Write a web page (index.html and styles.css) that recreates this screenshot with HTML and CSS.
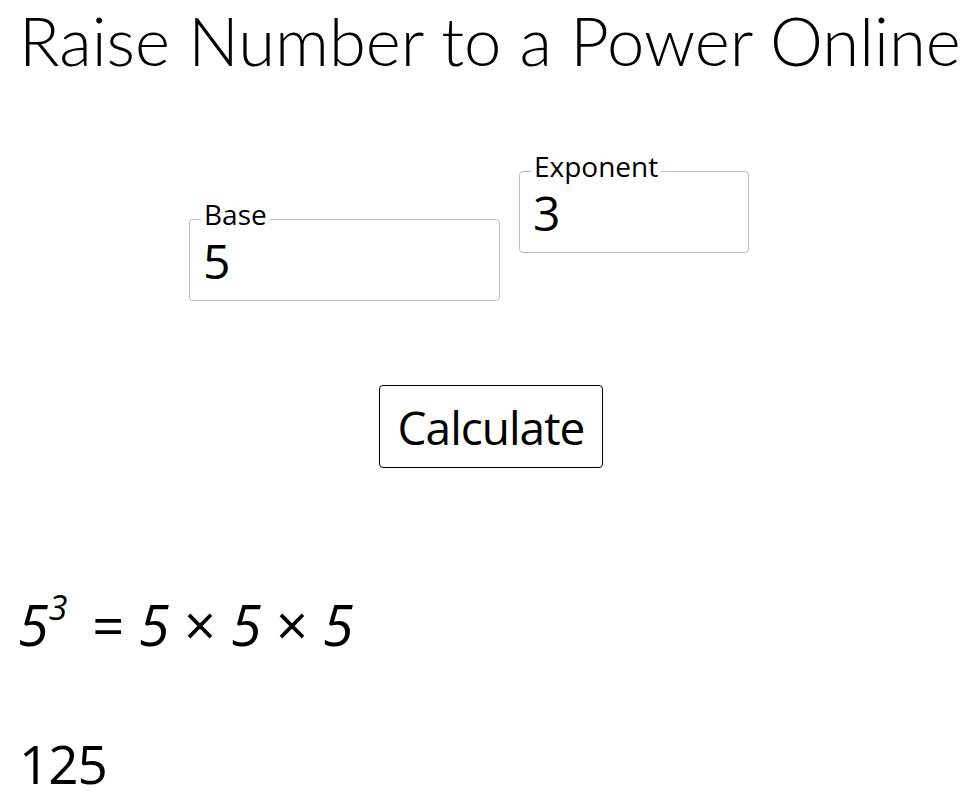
FILE: index.html
```html
<!DOCTYPE html>
<html lang="en">
<head>
<meta charset="utf-8">
<title>Raise Number to a Power Online</title>
<link rel="stylesheet" href="styles.css">
</head>
<body>
<h1 class="title">Raise Number to a Power Online</h1>
<div class="inputs">
  <fieldset class="field field-base">
    <legend class="field-label">Base</legend>
    <input class="field-input" type="text" value="5">
  </fieldset>
  <fieldset class="field field-exp">
    <legend class="field-label">Exponent</legend>
    <input class="field-input" type="text" value="3">
  </fieldset>
</div>
<div class="actions">
  <button class="calc" type="button">Calculate</button>
</div>
<p class="formula"><i>5<sup class="pow">3</sup></i> = <i>5</i> × <i>5</i> × <i>5</i></p>
<p class="result">125</p>
</body>
</html>
```
FILE: styles.css
```css
html, body {
  margin: 0;
  padding: 0;
  background: #ffffff;
  color: #000000;
  font-family: "Open Sans", "Noto Sans", sans-serif;
}

.title {
  margin: 0;
  padding-left: 19px;
  font-family: "Lato", "Open Sans", sans-serif;
  font-size: 67px;
  font-weight: 300;
  line-height: 80px;
  white-space: nowrap;
}

.inputs {
  display: flex;
  align-items: flex-start;
  gap: 19px;
  margin-top: 72px;
  padding-left: 189px;
}

.field {
  box-sizing: border-box;
  margin: 0;
  padding: 0 11px 18px;
  border: 1px solid #bcbcbc;
  border-radius: 4px;
}

.field-base {
  width: 311px;
  margin-top: 48px;
}

.field-exp {
  width: 230px;
}

.field-label {
  padding: 0 3px 10px;
  font-size: 28px;
  line-height: 28px;
}

.field-input {
  display: block;
  box-sizing: border-box;
  width: 100%;
  height: 44px;
  margin: 0;
  padding: 0 2px;
  border: none;
  outline: none;
  background: transparent;
  font-family: inherit;
  font-size: 48px;
  line-height: 44px;
  color: #000000;
}

.actions {
  margin-top: 84px;
  padding-left: 379px;
}

.calc {
  box-sizing: border-box;
  width: 224px;
  height: 83px;
  margin: 0;
  padding: 0;
  border: 1px solid #000000;
  border-radius: 4px;
  background: #ffffff;
  color: #000000;
  font-family: inherit;
  font-size: 46px;
  letter-spacing: -1px;
}

.formula,
.result {
  margin: 0;
  padding-left: 18px;
  font-size: 56px;
  line-height: 70px;
}

.formula {
  margin-top: 121px;
}

.result {
  margin-top: 70px;
  font-size: 53px;
  letter-spacing: -1px;
  padding-left: 19px;
}

.formula i {
  font-style: italic;
}

.pow {
  font-size: 34px;
  line-height: 0;
  vertical-align: 26px;
  margin-right: 10px;
}
```
